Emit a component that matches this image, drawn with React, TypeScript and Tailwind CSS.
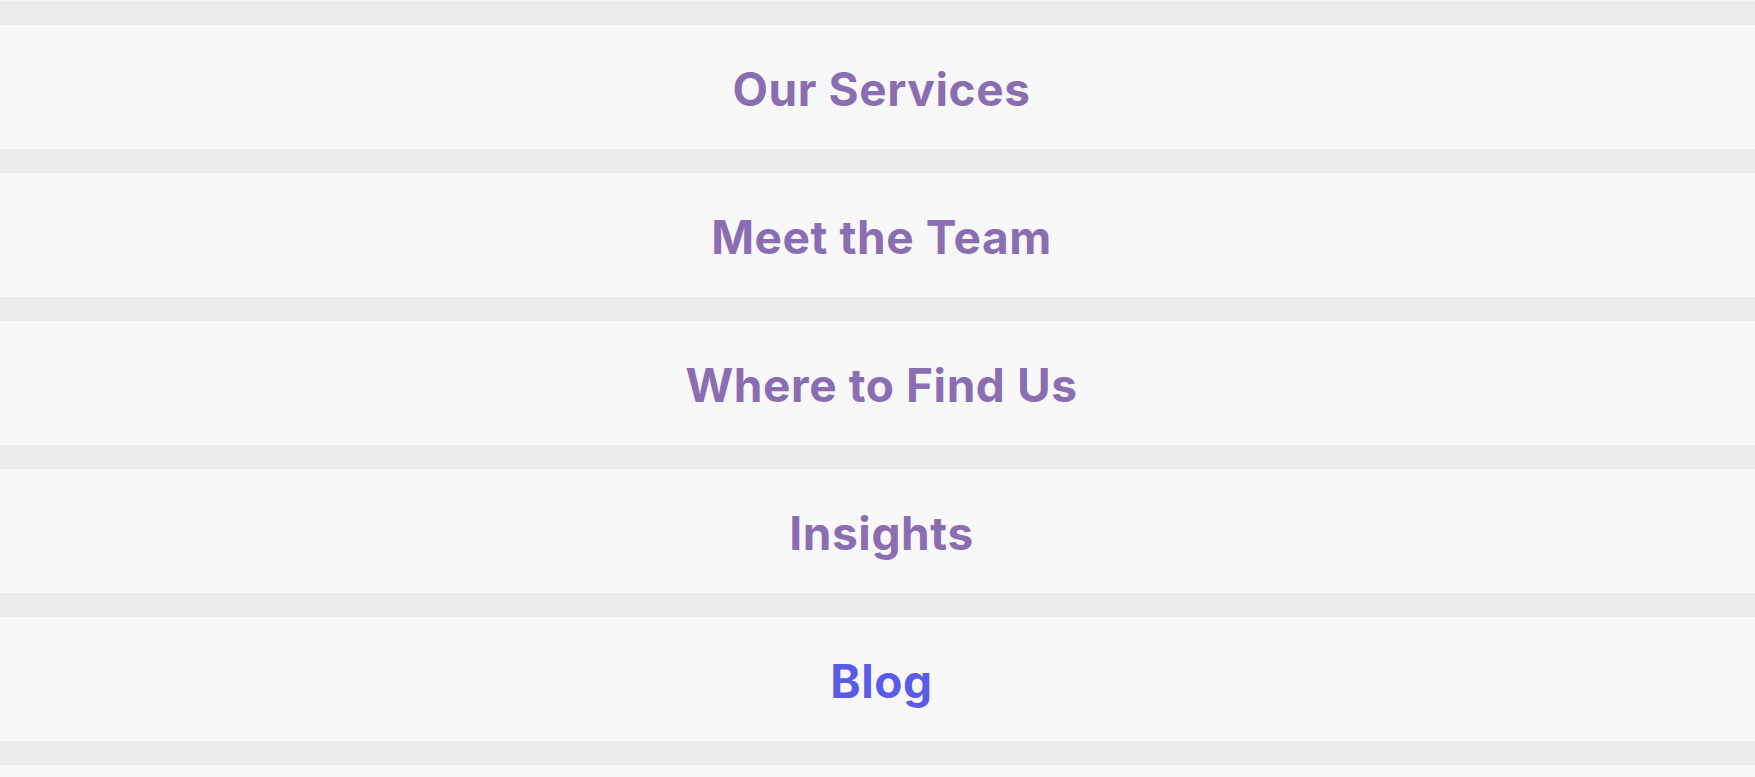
const items = [
  { label: "Our Services", active: false },
  { label: "Meet the Team", active: false },
  { label: "Where to Find Us", active: false },
  { label: "Insights", active: false },
  { label: "Blog", active: true },
  { label: "", active: false },
];

export default function App() {
  return (
    <div className="h-[777px] overflow-hidden bg-[#ececec] border-t border-[#f4f4f4] pt-6 font-['Inter',sans-serif]">
      <ul className="flex flex-col gap-6">
        {items.map((item, i) => (
          <li key={i} className="h-[124px] bg-[#f8f8f8] flex items-center justify-center pl-2">
            {item.label && (
              <a
                href="#"
                className={
                  "text-[46px] font-bold tracking-[0.6px] leading-none pt-1 " +
                  (item.active ? "text-[#5b5ce6]" : "text-[#8b6db2]")
                }
              >
                {item.label}
              </a>
            )}
          </li>
        ))}
      </ul>
    </div>
  );
}
